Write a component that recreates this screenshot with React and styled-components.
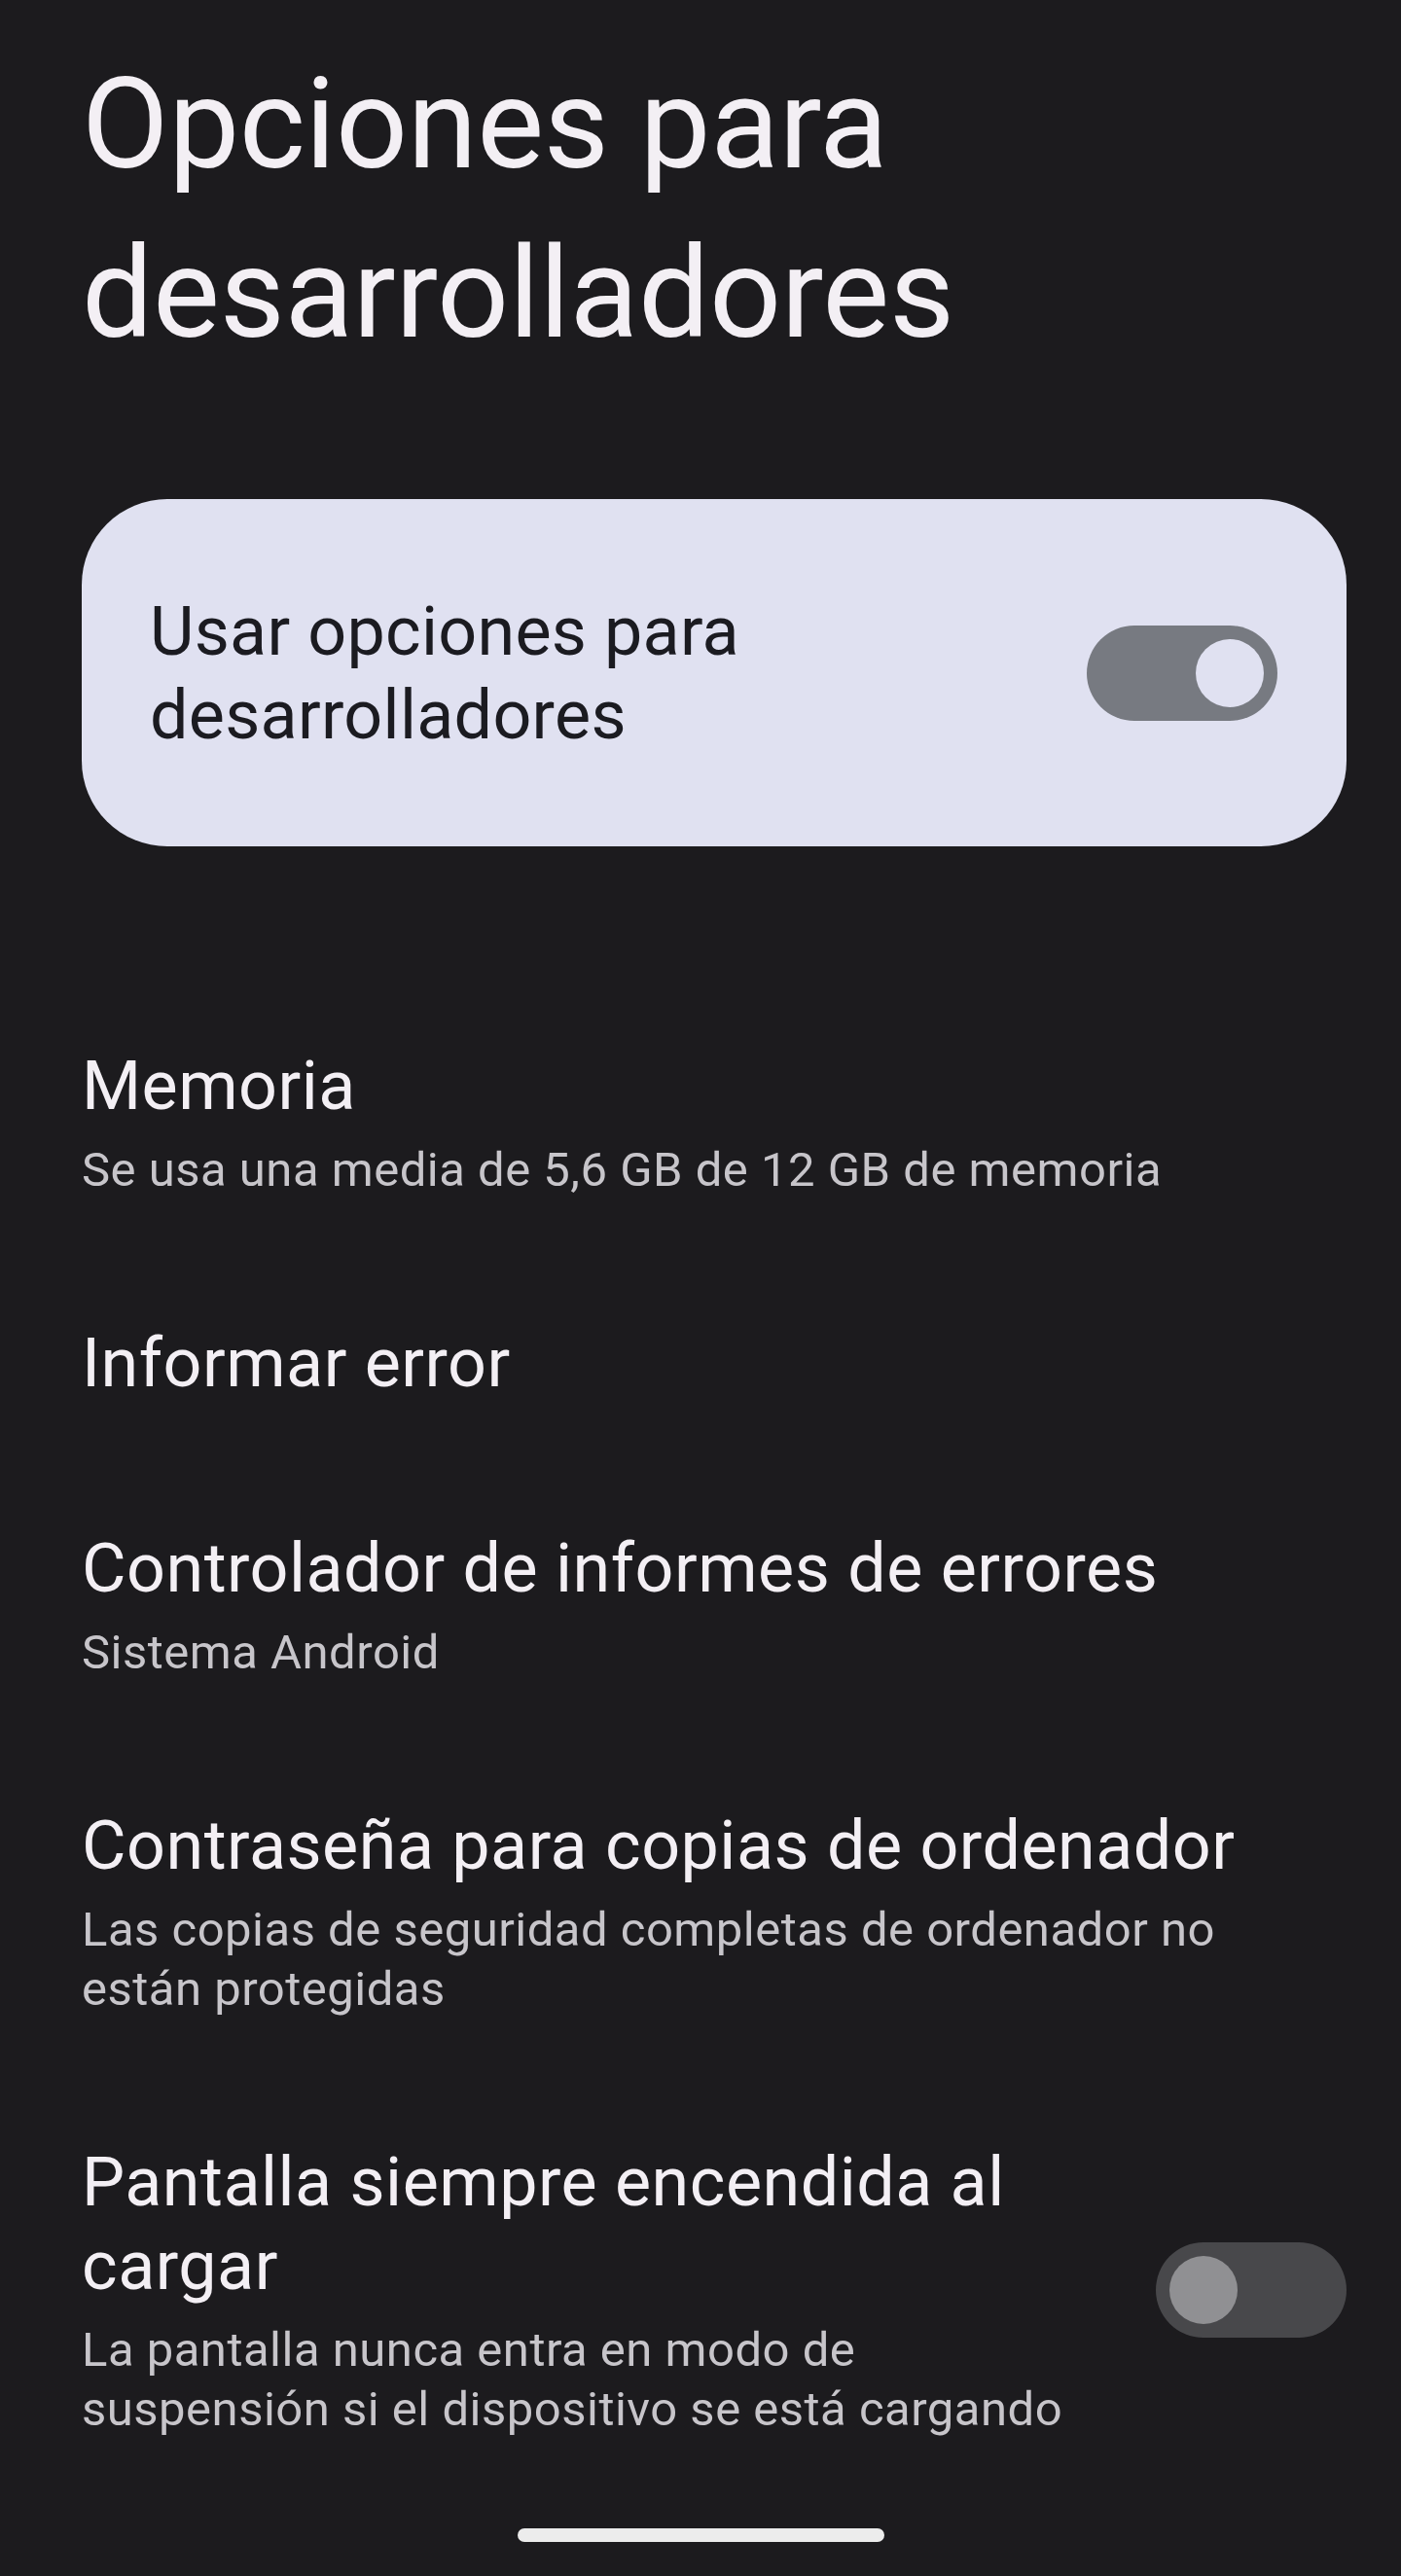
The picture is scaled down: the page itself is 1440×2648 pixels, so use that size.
import React from "react";
import styled, { createGlobalStyle } from "styled-components";

const GlobalStyle = createGlobalStyle`
  html, body {
    margin: 0;
    padding: 0;
    background: #1c1b1e;
  }
  body {
    font-family: Roboto, "Noto Sans", "Liberation Sans", sans-serif;
    -webkit-font-smoothing: antialiased;
  }
  * { box-sizing: border-box; }
`;

const Screen = styled.div`
  min-height: 2648px;
  display: flex;
  flex-direction: column;
  background: #1c1b1e;
`;

const Content = styled.main`
  padding: 41px 56px 0 84px;
  display: flex;
  flex-direction: column;
`;

const PageTitle = styled.h1`
  margin: 0;
  font-size: 130px;
  line-height: 174px;
  font-weight: 400;
  color: #f3eff4;
  letter-spacing: -0.3px;
`;

const MainSwitchCard = styled.section`
  margin-top: 124px;
  height: 357px;
  border-radius: 88px;
  background: #e0e1f1;
  display: flex;
  align-items: center;
  gap: 48px;
  padding: 0 71px 0 70px;
`;

const CardLabel = styled.div`
  flex: 1;
  min-width: 0;
  font-size: 70px;
  line-height: 86px;
  letter-spacing: 0.3px;
  color: #1b1b21;
`;

const Switch = styled.div`
  flex-shrink: 0;
  width: 196px;
  height: 98px;
  border-radius: 49px;
  padding: 14px;
  display: flex;
  align-items: center;
  justify-content: ${(p) => (p.$on ? "flex-end" : "flex-start")};
  background: ${(p) => (p.$on ? "#777a81" : "#48484b")};
`;

const Thumb = styled.span`
  width: 70px;
  height: 70px;
  border-radius: 50%;
  background: ${(p) => (p.$on ? "#e0e1f1" : "#909093")};
`;

const List = styled.div`
  margin-top: 141px;
  display: flex;
  flex-direction: column;
`;

const Item = styled.div`
  display: flex;
  align-items: center;
  gap: 56px;
  padding: 62px 0 63px;
`;

const ItemText = styled.div`
  flex: 1;
  min-width: 0;
  padding-right: 24px;
`;

const ItemTitle = styled.div`
  font-size: 70px;
  line-height: 86px;
  letter-spacing: 0.5px;
  color: #f3eff4;
`;

const ItemSummary = styled.div`
  margin-top: 13px;
  font-size: 49px;
  line-height: 61px;
  letter-spacing: 0.5px;
  color: #c7c5ca;
`;

const NavBar = styled.div`
  margin-top: auto;
  display: flex;
  justify-content: center;
  padding: 29px 0 35px;
`;

const Handle = styled.div`
  width: 377px;
  height: 14px;
  border-radius: 7px;
  background: #ececec;
`;

const items = [
  {
    title: "Memoria",
    summary: "Se usa una media de 5,6 GB de 12 GB de memoria",
  },
  { title: "Informar error" },
  {
    title: "Controlador de informes de errores",
    summary: "Sistema Android",
  },
  {
    title: "Contraseña para copias de ordenador",
    summary:
      "Las copias de seguridad completas de ordenador no están protegidas",
  },
  {
    title: "Pantalla siempre encendida al cargar",
    summary:
      "La pantalla nunca entra en modo de suspensión si el dispositivo se está cargando",
    toggle: false,
  },
];

export default function App() {
  return (
    <>
      <GlobalStyle />
      <Screen>
        <Content>
          <PageTitle>Opciones para desarrolladores</PageTitle>
          <MainSwitchCard>
            <CardLabel>Usar opciones para desarrolladores</CardLabel>
            <Switch $on>
              <Thumb $on />
            </Switch>
          </MainSwitchCard>
          <List>
            {items.map((it) => (
              <Item key={it.title}>
                <ItemText>
                  <ItemTitle>{it.title}</ItemTitle>
                  {it.summary && <ItemSummary>{it.summary}</ItemSummary>}
                </ItemText>
                {it.toggle !== undefined && (
                  <Switch $on={it.toggle}>
                    <Thumb $on={it.toggle} />
                  </Switch>
                )}
              </Item>
            ))}
          </List>
        </Content>
        <NavBar>
          <Handle />
        </NavBar>
      </Screen>
    </>
  );
}
